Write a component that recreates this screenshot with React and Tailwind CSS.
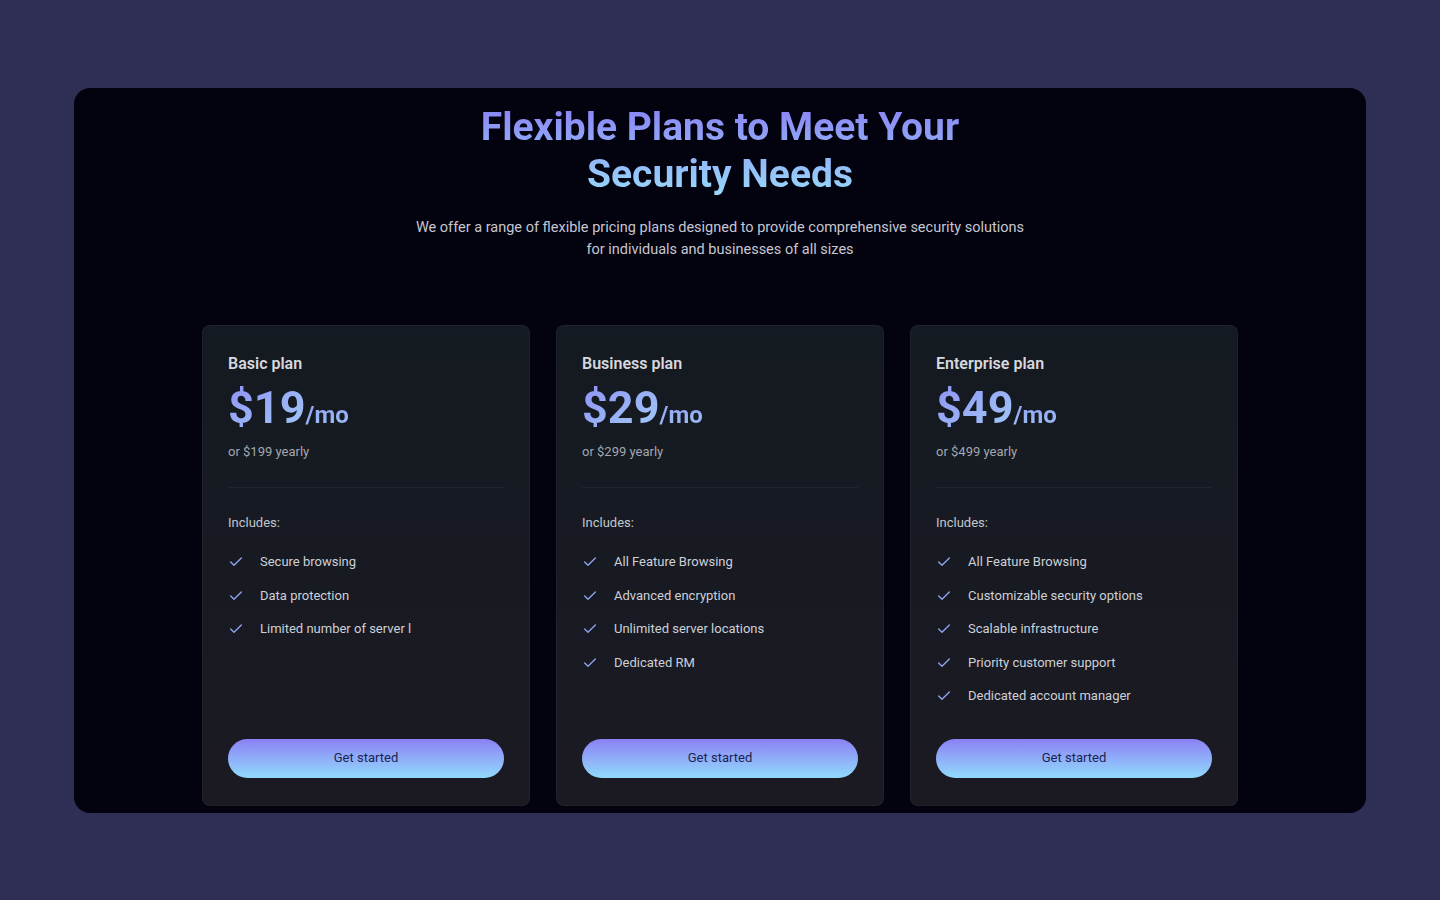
import { Check } from "lucide-react";

const plans = [
  {
    name: "Basic plan",
    price: "$19",
    yearly: "or $199 yearly",
    features: ["Secure browsing", "Data protection", "Limited number of server l"],
  },
  {
    name: "Business plan",
    price: "$29",
    yearly: "or $299 yearly",
    features: [
      "All Feature Browsing",
      "Advanced encryption",
      "Unlimited server locations",
      "Dedicated RM",
    ],
  },
  {
    name: "Enterprise plan",
    price: "$49",
    yearly: "or $499 yearly",
    features: [
      "All Feature Browsing",
      "Customizable security options",
      "Scalable infrastructure",
      "Priority customer support",
      "Dedicated account manager",
    ],
  },
];

function PlanCard({ plan }) {
  return (
    <div className="flex flex-col rounded-lg border border-white/[0.04] bg-gradient-to-b from-[#141a21] to-[#1b1a23] px-[25px] pt-[26px] pb-[27px]">
      <h3 className="text-base leading-6 font-semibold text-[#d6d8de]">{plan.name}</h3>
      <div className="mt-2 flex items-baseline leading-[48px]">
        <span className="bg-gradient-to-br from-[#8f92f4] to-[#a2cbf7] bg-clip-text text-[45px] leading-[48px] font-bold text-transparent">
          {plan.price}
        </span>
        <span className="bg-gradient-to-b from-[#8f98f4] to-[#9fc8f6] bg-clip-text text-[24px] font-bold text-transparent">
          /mo
        </span>
      </div>
      <p className="mt-[3px] text-[13px] leading-5 text-[#a3a6ae]">{plan.yearly}</p>
      <div className="mt-[25px] h-px bg-[#20252f]" />
      <p className="mt-[25px] text-[13px] leading-5 text-[#c3c6cd]">Includes:</p>
      <ul className="mt-[19px] flex flex-1 flex-col gap-[13.5px]">
        {plan.features.map((f) => (
          <li key={f} className="flex h-5 items-center gap-4 pt-px text-[13px] text-[#cdd0d7]">
            <Check size={16} strokeWidth={2} className="shrink-0 text-[#8ea5ee]" />
            <span>{f}</span>
          </li>
        ))}
      </ul>
      <button className="mt-[33px] h-[39px] w-full rounded-full bg-gradient-to-b from-[#8b80f5] to-[#90dafa] text-[13px] text-[#1c2352]">
        Get started
      </button>
    </div>
  );
}

export default function App() {
  return (
    <div
      className="flex min-h-screen items-center bg-[#2f2e54] px-[74px]"
      style={{ fontFamily: "Roboto, 'Noto Sans', sans-serif" }}
    >
      <div className="w-full rounded-2xl bg-[#03020f] pt-4 pb-[7px]">
        <h1 className="mx-auto w-fit bg-gradient-to-b from-[#8a80f4] to-[#98dcf9] bg-clip-text text-center text-[39px] leading-[47px] font-bold text-transparent">
          Flexible Plans to Meet Your
          <br />
          Security Needs
        </h1>
        <p className="mx-auto mt-[19px] max-w-[620px] text-center text-[14.5px] leading-[22px] text-[#c6c7d1]">
          We offer a range of flexible pricing plans designed to provide comprehensive security solutions
          for individuals and businesses of all sizes
        </p>
        <div className="mx-auto mt-[64px] grid w-[1036px] grid-cols-3 gap-[26px]">
          {plans.map((p) => (
            <PlanCard key={p.name} plan={p} />
          ))}
        </div>
      </div>
    </div>
  );
}
